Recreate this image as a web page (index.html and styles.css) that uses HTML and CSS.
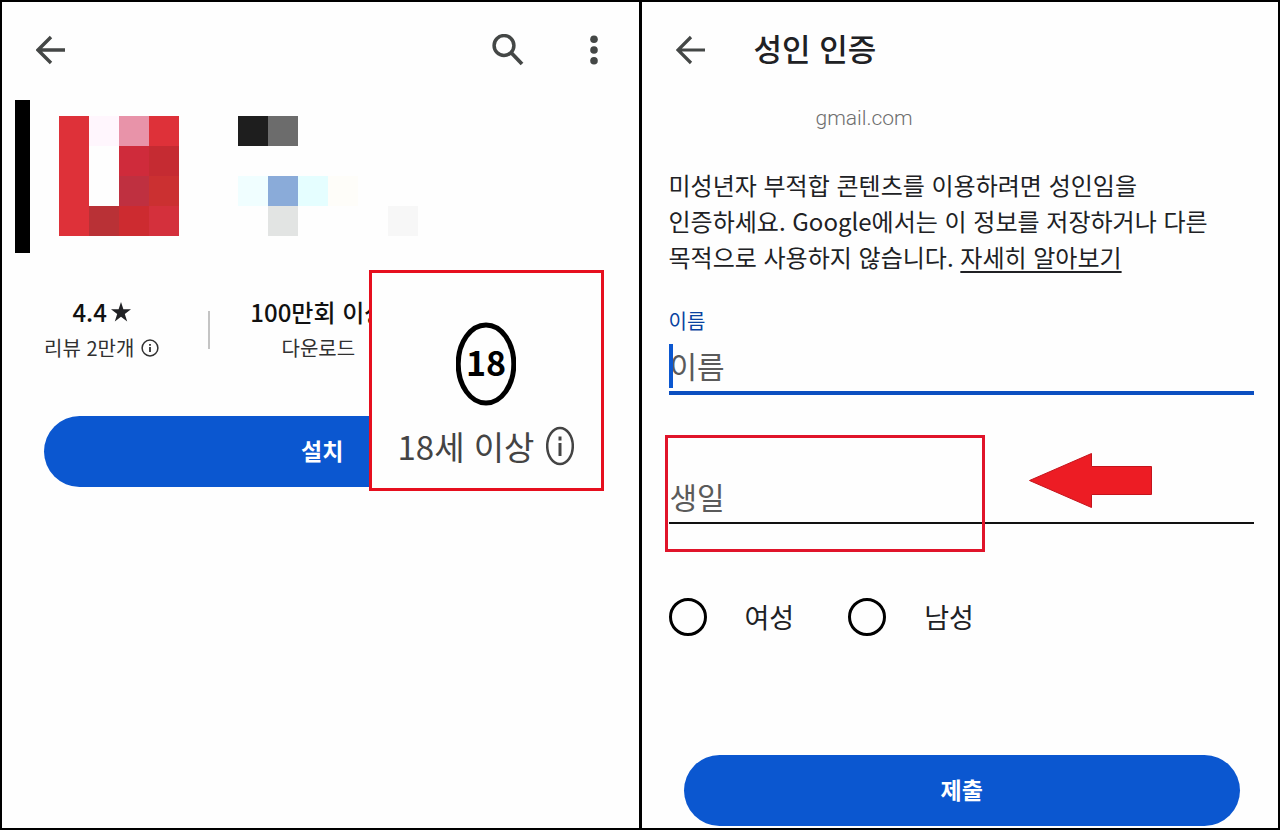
FILE: index.html
```html
<!DOCTYPE html>
<html lang="ko">
<head>
<meta charset="utf-8">
<meta name="viewport" content="width=device-width, initial-scale=1">
<title>성인 인증</title>
<link rel="stylesheet" href="styles.css">
</head>
<body>
<main class="frame">
  <section class="panel store">
    <header class="bar">
      <button class="icon-btn" type="button" aria-label="뒤로">
        <svg class="back" viewBox="0 0 30 30"><path d="M15 2 2 15l13 13M2.500 15H29" fill="none" stroke="#444746" stroke-width="3.400"/></svg>
      </button>
      <div class="actions">
        <button class="icon-btn" type="button" aria-label="검색">
          <svg width="32" height="32" viewBox="0 0 32 32" fill="none" stroke="#444746"><circle cx="12" cy="11.500" r="9.900" stroke-width="3.500"/><path d="m19 18.500 11 11.500" stroke-width="3.800"/></svg>
        </button>
        <button class="icon-btn" type="button" aria-label="더보기">
          <svg width="8" height="30" viewBox="0 0 8 30" fill="#444746"><circle cx="4" cy="4.300" r="3.800"/><circle cx="4" cy="15" r="3.800"/><circle cx="4" cy="25.700" r="3.800"/></svg>
        </button>
      </div>
    </header>

    <div class="app">
      <div class="app-edge"></div>
      <svg class="app-icon" width="120" height="120" viewBox="0 0 4 4" shape-rendering="crispEdges" role="img" aria-label="앱 아이콘">
        <path fill="#de3139" d="M0 0h1v4H0zM3 0h1v1H3z"/>
        <path fill="#fff6fd" d="M1 0h1v1H1z"/><path fill="#e893a9" d="M2 0h1v1H2z"/>
        <path fill="#cf2b3b" d="M2 1h1v1H2z"/><path fill="#c52b32" d="M3 1h1v1H3z"/>
        <path fill="#bf3040" d="M2 2h1v1H2z"/><path fill="#cb3031" d="M3 2h1v1H3z"/>
        <path fill="#b93136" d="M1 3h1v1H1z"/><path fill="#cd2b30" d="M2 3h1v1H2z"/><path fill="#d4303c" d="M3 3h1v1H3z"/>
      </svg>
      <svg class="app-name" width="180" height="120" viewBox="0 0 6 4" shape-rendering="crispEdges" role="img" aria-label="앱 이름">
        <path fill="#1e1e1e" d="M0 0h1v1H0z"/><path fill="#6c6c6c" d="M1 0h1v1H1z"/>
        <path fill="#f0feff" d="M0 2h1v1H0z"/><path fill="#8aabd9" d="M1 2h1v1H1z"/><path fill="#e5feff" d="M2 2h1v1H2z"/><path fill="#fefdf9" d="M3 2h1v1H3z"/>
        <path fill="#e2e4e3" d="M1 3h1v1H1z"/><path fill="#f7f7f7" d="M5 3h1v1H5z"/>
      </svg>
    </div>

    <div class="details">
      <div class="stats">
        <div class="stat">
          <strong class="stat-value">4.4<svg width="20" height="20" viewBox="0 0 20 20" fill="#202124"><path d="m10 0 2.400 7.300H20l-6.200 4.600 2.400 7.500L10 14.800l-6.200 4.600 2.400-7.500L0 7.300h7.600z"/></svg></strong>
          <span class="stat-label">리뷰 2만개 <svg width="18" height="18" viewBox="0 0 18 18" fill="none" stroke="#303030"><circle cx="9" cy="9" r="7.900" stroke-width="1.500"/><path d="M9 8v5M9 5v1.800" stroke-width="1.800"/></svg></span>
        </div>
        <div class="divider"></div>
        <div class="stat">
          <strong class="stat-value">100만회 이상</strong>
          <span class="stat-label">다운로드</span>
        </div>
      </div>
      <button class="primary install" type="button">설치</button>
      <aside class="callout">
        <div class="age">
          <svg class="age-ring" width="60" height="84" viewBox="0 0 60 84"><ellipse cx="30" cy="42" rx="27.800" ry="39" fill="none" stroke="#000" stroke-width="5"/></svg>
          <span>18</span>
        </div>
        <div class="age-label">18세 이상
          <svg width="28" height="40" viewBox="0 0 28 40" fill="none" stroke="#444"><ellipse cx="14" cy="20" rx="12.800" ry="18" stroke-width="2.500"/><path d="M14 17v13M14 10.500v4" stroke-width="3"/></svg>
        </div>
      </aside>
    </div>
  </section>

  <form class="panel verify">
    <header class="bar">
      <button class="icon-btn" type="button" aria-label="뒤로">
        <svg class="back" viewBox="0 0 30 30"><path d="M15 2 2 15l13 13M2.500 15H29" fill="none" stroke="#444746" stroke-width="3.200"/></svg>
      </button>
      <h1 class="title">성인 인증</h1>
    </header>
    <p class="account">gmail.com</p>
    <p class="intro">미성년자 부적합 콘텐츠를 이용하려면 성인임을<br>인증하세요. Google에서는 이 정보를 저장하거나 다른<br>목적으로 사용하지 않습니다. <a class="more" href="#">자세히 알아보기</a></p>
    <div class="field name">
      <label class="field-label" for="name">이름</label>
      <input class="input focused" id="name" type="text" placeholder="이름">
      <span class="caret"></span>
    </div>
    <div class="field birth">
      <input class="input" id="birth" type="text" placeholder="생일" aria-label="생일">
      <div class="highlight"></div>
      <svg class="arrow" width="123" height="55" viewBox="0 0 123 55"><path fill="#ed1c24" stroke="#c4141c" stroke-width="1" d="M.5 27.500 62.500.5v13h60v28h-60v13z"/></svg>
    </div>
    <div class="genders" role="radiogroup" aria-label="성별">
      <label class="gender"><input class="radio" type="radio" name="gender">여성</label>
      <label class="gender"><input class="radio" type="radio" name="gender">남성</label>
    </div>
    <button class="primary submit" type="button">제출</button>
  </form>
</main>
</body>
</html>
```
FILE: styles.css
```css
* { box-sizing: border-box; }
body {
  margin: 0;
  background: #000;
  color: #202124;
  font-family: "Noto Sans CJK KR", sans-serif;
}
button, input { font-family: inherit; }
svg { display: block; flex: none; }

.frame {
  display: grid;
  grid-template-columns: 1fr 1fr;
  gap: 3px;
  min-height: 100vh;
  padding: 2px;
}
.panel {
  display: flex;
  flex-direction: column;
  min-width: 0;
  background: #fefefe;
  overflow: hidden;
}
.bar {
  display: flex;
  align-items: center;
  height: 96px;
}
.icon-btn {
  padding: 0;
  border: 0;
  background: none;
  cursor: pointer;
}
.back { width: 30px; height: 30px; }
.primary {
  height: 71px;
  padding: 0 0 3px;
  border: 0;
  border-radius: 36px;
  background: #0b57d0;
  color: #fff;
  font-size: 23px;
  font-weight: 700;
  cursor: pointer;
}

.store .bar { justify-content: space-between; padding: 0 41px 0 34px; }
.actions { display: flex; align-items: center; gap: 66px; }
.app { display: flex; align-items: flex-start; padding: 2px 13px 0; }
.app-edge { width: 15px; height: 153px; background: #000; }
.app-icon { margin: 16px 59px 0 29px; }
.app-name { margin-top: 16px; }
.details {
  position: relative;
  display: flex;
  flex-direction: column;
  padding: 41px 38px 0 42px;
}
.stats { display: flex; align-items: center; height: 72px; }
.stat {
  display: flex;
  flex-direction: column;
  align-items: center;
  white-space: nowrap;
}
.stat-value {
  display: flex;
  align-items: center;
  gap: 4px;
  color: #111;
  font-size: 24px;
  line-height: 36px;
  font-weight: 500;
}
.stat-label {
  display: flex;
  align-items: center;
  gap: 7px;
  color: #303030;
  font-size: 20px;
  line-height: 36px;
}
.divider { width: 2px; height: 38px; margin: 0 40px 0 49px; background: #c4c4c4; }
.install { margin-top: 50px; }
.callout {
  position: absolute;
  top: 17px;
  right: 35px;
  display: flex;
  flex-direction: column;
  align-items: center;
  width: 235px;
  height: 221px;
  padding-top: 49px;
  border: 3px solid #e60f1e;
  background: #fefefe;
}
.age {
  display: grid;
  place-items: center;
  color: #000;
  font-size: 34px;
  font-weight: 700;
  line-height: 84px;
}
.age > * { grid-area: 1 / 1; }
.age span { padding-bottom: 4px; line-height: 80px; }
.age-label {
  display: flex;
  align-items: center;
  gap: 12px;
  margin-top: 16px;
  color: #444;
  font-size: 33px;
  line-height: 48px;
  white-space: nowrap;
}

.verify { padding: 0 24px 2px 27px; }
.verify .bar { gap: 48px; padding-left: 7px; }
.title { margin: 0; padding-bottom: 4px; font-size: 31px; line-height: 40px; font-weight: 500; }
.account {
  margin: 0 0 0 147px;
  color: #6e6e6e;
  font-family: Roboto, sans-serif;
  font-size: 21px;
  font-weight: 300;
  line-height: 40px;
}
.intro { margin: 29px 0 0; font-size: 24px; line-height: 36px; }
.more {
  color: inherit;
  text-decoration-thickness: 2px;
  text-underline-offset: 4px;
}
.field { position: relative; display: flex; flex-direction: column; }
.name { margin-top: 31px; }
.birth { margin-top: 75px; }
.field-label { color: #0842a0; font-size: 20px; line-height: 30px; }
.input {
  width: 100%;
  height: 54px;
  padding: 0 0 0 1px;
  border: 0;
  border-bottom: 2px solid #111;
  border-radius: 0;
  background: none;
  color: #202124;
  font-size: 30px;
  outline: 0;
}
.input::placeholder { color: #5a5a5a; opacity: 1; }
.focused { height: 59px; padding-top: 3px; border-bottom: 4px solid #0b4fc0; }
.caret {
  position: absolute;
  left: 0;
  bottom: 7px;
  width: 4px;
  height: 44px;
  background: #0b57d0;
}
.highlight {
  position: absolute;
  left: -4px;
  bottom: -28px;
  width: 320px;
  height: 117px;
  border: 3px solid #e0142a;
  pointer-events: none;
}
.arrow { position: absolute; left: 360px; bottom: 16px; }
.genders { display: flex; gap: 54px; margin-top: 74px; }
.gender {
  display: flex;
  align-items: center;
  gap: 38px;
  font-size: 27px;
  line-height: 38px;
}
.radio {
  appearance: none;
  width: 38px;
  height: 38px;
  margin: 0;
  border: 3px solid #000;
  border-radius: 50%;
}
.radio:checked { background: radial-gradient(#0b57d0 50%, transparent 54%); }
.submit { margin: auto 14px 0 15px; }
```
